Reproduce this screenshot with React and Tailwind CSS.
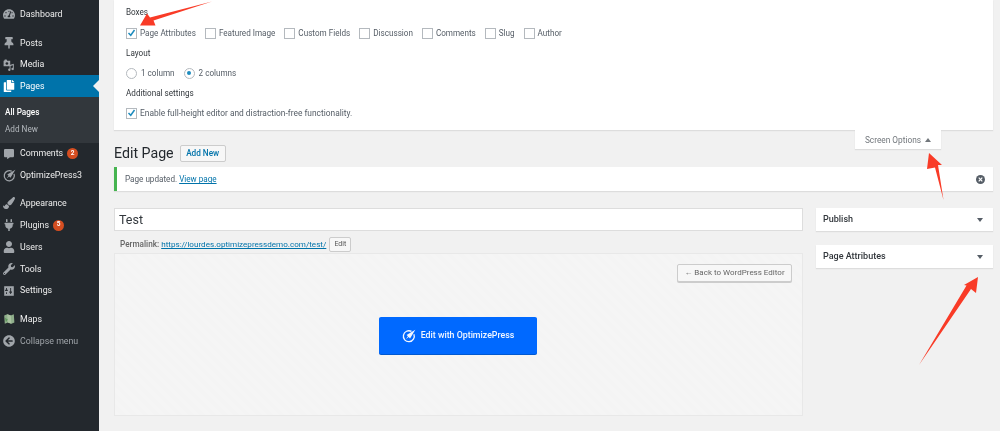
import {
  FaTachometerAlt,
  FaThumbtack,
  FaCopy,
  FaCommentAlt,
  FaPaintBrush,
  FaPlug,
  FaUser,
  FaWrench,
  FaArrowCircleLeft,
} from "react-icons/fa";

const font = { fontFamily: 'Roboto, "Open Sans", sans-serif' };

const OpIcon = ({ className }) => (
  <svg viewBox="0 0 20 20" className={className} fill="none" stroke="currentColor">
    <path d="M13.500 3.500A7.800 7.800 0 1 0 17 7.500" strokeWidth="1.900" />
    <path d="M19 1 6.500 8.500l2 2-3 4 4-3 2 2z" fill="currentColor" stroke="none" />
  </svg>
);

const MediaIcon = ({ className }) => (
  <svg viewBox="0 0 20 20" className={className} fill="currentColor">
    <path d="M1 3h11v9H1zM3 1h3l1 2H2z" />
    <circle cx="6.500" cy="7.500" r="2.200" fill="#23282d" />
    <path d="M18 8v8.500a2 2 0 1 1-1.500-1.900V10.600l-4 1v6.200a2 2 0 1 1-1.500-1.900V10z" />
  </svg>
);

const SettingsIcon = ({ className }) => (
  <svg viewBox="0 0 20 20" className={className} fill="currentColor">
    <path d="M2 2h16v16H2z" />
    <path d="M5 5h1.500v3H8v2H3.500V8H5zM12 5h1.500v6H15v2h-1.500v2H12v-2h-1.500v-2H12zM5 12h1.500v3H5z" fill="#23282d" />
  </svg>
);

const MapIcon = ({ className }) => (
  <svg viewBox="0 0 20 20" className={className}>
    <path d="m2 4 5-2 6 2 5-2 1 14-5 2-6-2-5 2z" fill="#8fae8b" />
    <path d="m7 2 6 2 1 14-6-2z" fill="#a9c3a0" />
    <path d="m3 8 5 3-3 4z" fill="#5f9a5c" />
  </svg>
);

const MenuItem = ({ icon: Icon, label, badge, iconClass = "w-[12px] h-[12px]", className = "" }) => (
  <div className={`flex h-[22px] items-center text-[8.800px] text-[#eeeeee] ${className}`}>
    <span className="flex w-5 shrink-0 justify-center pr-[2px] text-[#a0a5aa]">
      <Icon className={iconClass} />
    </span>
    <span className="pt-[1px]">{label}</span>
    {badge && (
      <span className="ml-[4px] flex h-[11px] w-[11px] items-center justify-center rounded-full bg-[#d54e21] text-[6.500px] font-bold text-white">
        {badge}
      </span>
    )}
  </div>
);

const Sidebar = () => (
  <aside className="w-[99px] shrink-0 bg-[#23282d] pt-[3px]">
    <MenuItem icon={FaTachometerAlt} label="Dashboard" />
    <MenuItem icon={FaThumbtack} label="Posts" className="mt-[7px]" />
    <MenuItem icon={MediaIcon} label="Media" className="!h-[21px]" />
    <div className="relative">
      <MenuItem icon={FaCopy} label="Pages" className="bg-[#0073aa] !text-white [&_span]:!text-white" />
      <span className="absolute right-0 top-[5px] h-0 w-0 border-y-[6px] border-r-[6px] border-y-transparent border-r-[#f1f1f1]" />
    </div>
    <div className="bg-[#32373c] py-[6px] pl-[5px] text-[8.200px]">
      <div className="flex h-[17px] items-center pt-[1px] font-medium text-white">All Pages</div>
      <div className="flex h-[17px] items-center pt-[1px] text-[#b4b9be]">Add New</div>
    </div>
    <MenuItem icon={FaCommentAlt} label="Comments" badge="2" iconClass="w-[10px] h-[10px]" className="!h-[21px]" />
    <MenuItem icon={OpIcon} label="OptimizePress3" iconClass="w-[13px] h-[13px]" />
    <MenuItem icon={FaPaintBrush} label="Appearance" className="mt-[6px]" />
    <MenuItem icon={FaPlug} label="Plugins" badge="5" />
    <MenuItem icon={FaUser} label="Users" />
    <MenuItem icon={FaWrench} label="Tools" />
    <MenuItem icon={SettingsIcon} label="Settings" className="!h-[21px]" />
    <MenuItem icon={MapIcon} label="Maps" className="mt-[7px]" />
    <MenuItem icon={FaArrowCircleLeft} label="Collapse menu" className="!text-[#a0a5aa]" />
  </aside>
);

const Checkbox = ({ label, checked }) => (
  <label className="flex items-center gap-[3px]">
    <span className="flex h-[11px] w-[11px] items-center justify-center border border-[#b4b9be] bg-white">
      {checked && (
        <svg viewBox="0 0 12 12" className="h-[10px] w-[10px]" fill="none" stroke="#1e8cbe" strokeWidth="2">
          <path d="m2 6 3 3 5-7" />
        </svg>
      )}
    </span>
    <span>{label}</span>
  </label>
);

const Radio = ({ label, checked }) => (
  <label className="flex items-center gap-[4px]">
    <span className="flex h-[11px] w-[11px] items-center justify-center rounded-full border border-[#b4b9be] bg-white">
      {checked && <span className="h-[4px] w-[4px] rounded-full bg-[#1e8cbe]" />}
    </span>
    <span>{label}</span>
  </label>
);

const ScreenOptions = () => (
  <section className="relative h-[130px] bg-white pl-[12px] text-[8.150px] text-[#555d66] shadow-[0_1px_1px_#dddddd]">
    <div className="flex h-[25px] items-center text-[#32373c]">Boxes</div>
    <div className="flex h-[17px] items-center gap-[9px]">
      <Checkbox label="Page Attributes" checked />
      <Checkbox label="Featured Image" />
      <Checkbox label="Custom Fields" />
      <Checkbox label="Discussion" />
      <Checkbox label="Comments" />
      <Checkbox label="Slug" />
      <Checkbox label="Author" />
    </div>
    <div className="mt-[3px] flex h-[17px] items-center text-[#32373c]">Layout</div>
    <div className="mt-[3px] flex h-[17px] items-center gap-[9px]">
      <Radio label="1 column" />
      <Radio label="2 columns" checked />
    </div>
    <div className="mt-[3px] flex h-[17px] items-center text-[#32373c]">Additional settings</div>
    <div className="mt-[3px] flex h-[17px] items-center text-[8.400px]">
      <Checkbox label="Enable full-height editor and distraction-free functionality." checked />
    </div>
    <div className="absolute right-[52px] top-full flex h-[19px] w-[86px] items-center justify-center gap-[4px] bg-white pt-[1px] text-[8.300px] text-[#72777c] shadow-[0_1px_1px_#dddddd]">
      Screen Options
      <span className="h-0 w-0 border-x-[3px] border-b-[4px] border-x-transparent border-b-[#72777c]" />
    </div>
  </section>
);

const SideBox = ({ title, className = "" }) => (
  <div className={`flex h-[23px] items-center justify-between bg-white pl-[7px] pr-[10px] pt-[1px] text-[9px] font-medium text-[#32373c] shadow-[0_1px_1px_#dddddd] ${className}`}>
    {title}
    <span className="h-0 w-0 border-x-[3px] border-t-[4px] border-x-transparent border-t-[#555d66]" />
  </div>
);

const Arrows = () => (
  <svg viewBox="0 0 1000 431" className="pointer-events-none absolute inset-0 h-[431px] w-[1000px]" fill="#f93b27">
    <path d="M212 1.500 153.500 20.500 155.500 25.500 140 25.500 147 13.500 150 17.500z" />
    <path d="M929 153 942 165 938 165 943.500 200 935 167.500 927 169z" />
    <path d="M978 277 976 293 971 289 919 365 966.500 285.500 964 285z" />
  </svg>
);

export default function App() {
  return (
    <div className="relative flex h-[431px] w-[1000px] overflow-hidden bg-[#f1f1f1] blur-[0.3px]" style={font}>
      <Sidebar />
      <main className="ml-[15px] w-[879px] shrink-0">
        <ScreenOptions />

        <div className="mt-[15px] flex h-[17px] items-center">
          <h1 className="pt-[1px] text-[14.200px] text-[#23282d]">Edit Page</h1>
          <button className="ml-[6px] h-[17px] w-[46px] rounded-[2px] border border-[#cccccc] bg-[#f7f7f7] text-[8.200px] font-medium text-[#0073aa]">
            Add New
          </button>
        </div>

        <div className="mt-[5px] flex h-[24px] items-center justify-between border-l-[3px] border-[#46b450] bg-white px-[8px] text-[8.150px] text-[#555d66] shadow-[0_1px_1px_#dddddd]">
          <p className="pt-[1px]">
            Page updated. <a className="text-[#0073aa] underline">View page</a>
          </p>
          <svg viewBox="0 0 10 10" className="h-[9px] w-[9px]">
            <circle cx="5" cy="5" r="5" fill="#555d66" />
            <path d="m3 3 4 4m0-4-4 4" stroke="#ffffff" strokeWidth="1.300" />
          </svg>
        </div>

        <div className="mt-[17px] flex gap-[13px]">
          <div className="w-[689px]">
            <div className="flex h-[23px] items-center border border-[#dddddd] bg-white pl-[4px] pt-[1px] text-[12.500px] text-[#32373c]">
              Test
            </div>
            <div className="mt-[6px] flex h-[15px] items-center pl-[6px] text-[8.200px] text-[#666666]">
              <span className="font-medium">Permalink:</span>
              <a className="ml-[2px] text-[8.100px] text-[#0073aa] underline">https://lourdes.optimizepressdemo.com/test/</a>
              <button className="ml-[3px] h-[15px] w-[22px] rounded-[2px] border border-[#cccccc] bg-[#f7f7f7] text-[7px] text-[#555555]">
                Edit
              </button>
            </div>
            <div className="mt-[1px] h-[163px] border border-[#e8e8e8] bg-[repeating-linear-gradient(45deg,#f5f5f5_0,#f5f5f5_4px,#f4f4f4_4px,#f4f4f4_8px)] pr-[10px] pt-[10px]">
              <div className="flex justify-end">
                <button className="h-[18px] w-[115px] rounded-[2px] border border-[#cccccc] bg-[#f7f7f7] text-[8px] text-[#666666] shadow-[0_1px_0_#cccccc]">
                  ← Back to WordPress Editor
                </button>
              </div>
              <div className="mt-[35px] flex pl-[264px]">
                <button className="flex h-[37px] w-[158px] items-center justify-center gap-[5px] rounded-[2px] bg-[#0069ff] text-[8.800px] font-medium text-[#f2f7ff] shadow-[0_1px_0_#0058d0]">
                  <OpIcon className="h-[14px] w-[14px]" />
                  Edit with OptimizePress
                </button>
              </div>
            </div>
          </div>
          <div className="w-[177px]">
            <SideBox title="Publish" />
            <SideBox title="Page Attributes" className="mt-[14px]" />
          </div>
        </div>
      </main>
      <Arrows />
    </div>
  );
}
